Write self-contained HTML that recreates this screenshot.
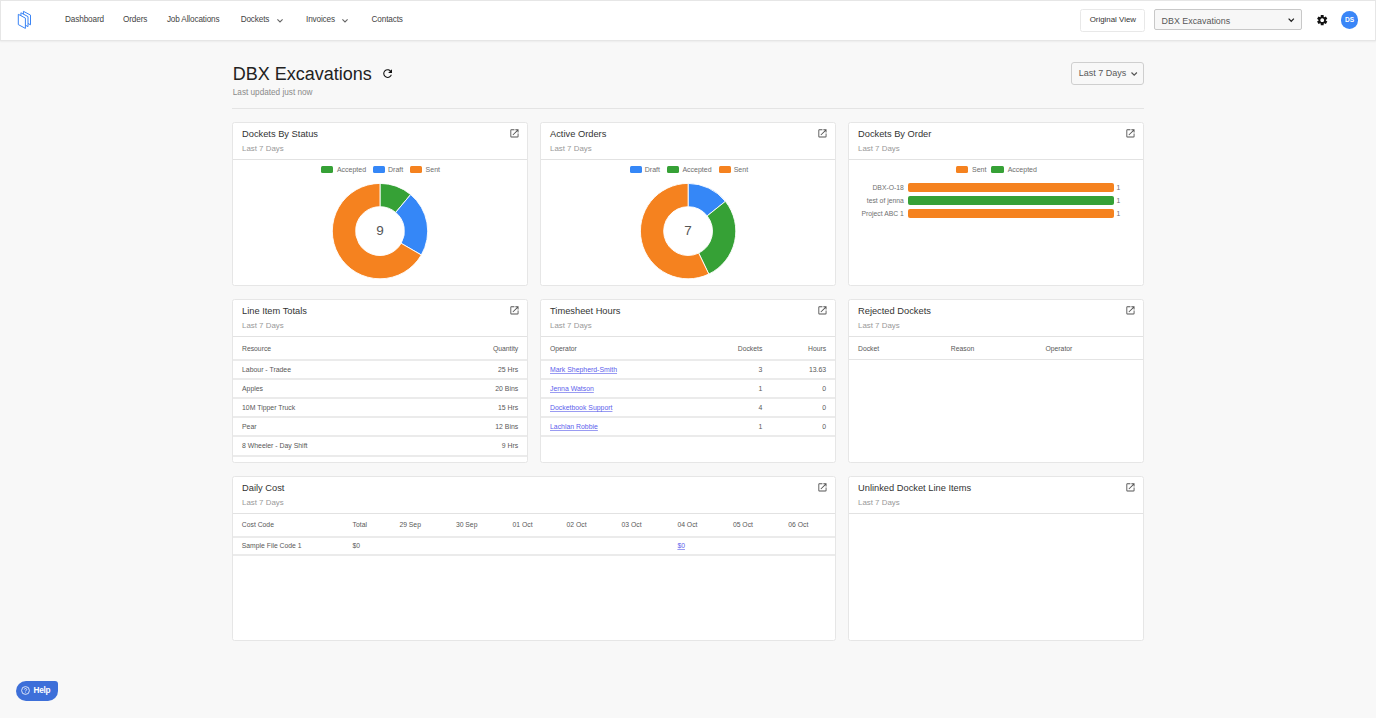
<!DOCTYPE html><html><head><meta charset="utf-8"><style>
html,body{margin:0;padding:0;}
body{width:1376px;height:718px;overflow:hidden;background:#f8f8f8;position:relative;font-family:"Liberation Sans",sans-serif;}
.t{position:absolute;white-space:nowrap;}
.b{position:absolute;box-sizing:border-box;}
svg{position:absolute;overflow:visible;}
</style></head><body>
<div class="b" style="left:0px;top:0px;width:1376px;height:41px;background:#fff;border:1px solid #e6e6e6;box-shadow:0 1px 1.5px rgba(0,0,0,0.05);"></div>
<svg style="left:14px;top:8px" width="22" height="24" viewBox="0 0 22 24"><g fill="#fff" stroke="#3a84f5" stroke-width="1" stroke-linejoin="round">
<path d="M9.4 3.3 L16.5 7.1 L16.5 16.8 L9.4 13 Z"/>
<path d="M6.9 4.8 L14 8.6 L14 18.6 L6.9 14.8 Z"/>
<path d="M4.3 6.3 L11.4 10.1 L11.4 20.4 L4.3 16.6 Z"/>
</g></svg>
<div class="t" style="left:65.10px;top:15px;font-size:8.2px;line-height:9.84px;color:#444;font-weight:normal;letter-spacing:-0.14px;">Dashboard</div>
<div class="t" style="left:123.00px;top:15px;font-size:8.2px;line-height:9.84px;color:#444;font-weight:normal;letter-spacing:-0.14px;">Orders</div>
<div class="t" style="left:166.90px;top:15px;font-size:8.2px;line-height:9.84px;color:#444;font-weight:normal;letter-spacing:-0.14px;">Job Allocations</div>
<div class="t" style="left:240.70px;top:15px;font-size:8.2px;line-height:9.84px;color:#444;font-weight:normal;letter-spacing:-0.14px;">Dockets</div>
<div class="t" style="left:306.00px;top:15px;font-size:8.2px;line-height:9.84px;color:#444;font-weight:normal;letter-spacing:-0.14px;">Invoices</div>
<div class="t" style="left:371.60px;top:15px;font-size:8.2px;line-height:9.84px;color:#444;font-weight:normal;letter-spacing:-0.14px;">Contacts</div>
<svg style="left:277.3px;top:18.6px" width="6" height="3.6" viewBox="0 0 6 3.6"><path d="M0.4 0.4 L3 3 L5.6 0.4" fill="none" stroke="#666" stroke-width="1.1"/></svg>
<svg style="left:342.2px;top:18.6px" width="6" height="3.6" viewBox="0 0 6 3.6"><path d="M0.4 0.4 L3 3 L5.6 0.4" fill="none" stroke="#666" stroke-width="1.1"/></svg>
<div class="b" style="left:1080px;top:9.2px;width:64.6px;height:22.4px;background:#fff;border:1px solid #e8e8e8;border-radius:2.5px;"></div>
<div class="t" style="left:1089.70px;top:15px;font-size:7.9px;line-height:9.48px;color:#333;font-weight:normal;">Original View</div>
<div class="b" style="left:1154.4px;top:9.4px;width:147.4px;height:21px;background:#f7f7f7;border:1px solid #c8c8c8;border-radius:2px;"></div>
<div class="t" style="left:1161.60px;top:16px;font-size:8.9px;line-height:10.68px;color:#585858;font-weight:normal;">DBX Excavations</div>
<svg style="left:1287.6px;top:18px" width="6.5" height="4.2" viewBox="0 0 6.5 4.2"><path d="M0.6 0.6 L3.25 3.3 L5.9 0.6" fill="none" stroke="#222" stroke-width="1.2"/></svg>
<svg style="left:1316.7px;top:14.6px" width="10.4" height="10.4" viewBox="0 0 24 24"><path fill="#111" fill-rule="evenodd" d="M8.42 4.40 L8.75 0.24 L15.25 0.24 L15.58 4.40 L16.79 5.10 L20.56 3.30 L23.81 8.94 L20.37 11.30 L20.37 12.70 L23.81 15.06 L20.56 20.70 L16.79 18.90 L15.58 19.60 L15.25 23.76 L8.75 23.76 L8.42 19.60 L7.21 18.90 L3.44 20.70 L0.19 15.06 L3.63 12.70 L3.63 11.30 L0.19 8.94 L3.44 3.30 L7.21 5.10 Z M12 7.6 A4.4 4.4 0 1 0 12.001 7.6 Z"/></svg>
<div class="b" style="left:1340.9px;top:11.4px;width:17.2px;height:17.2px;background:#3a86f7;border-radius:50%;"></div>
<div class="t" style="left:1149.50px;width:400px;text-align:center;top:16px;font-size:6.6px;line-height:7.92px;color:#fff;font-weight:bold;">DS</div>
<div class="t" style="left:232.80px;top:64px;font-size:18px;line-height:21.60px;color:#222;font-weight:normal;">DBX Excavations</div>
<svg style="left:380.9px;top:67.1px" width="13.2" height="13.2" viewBox="0 0 24 24"><path fill="#111" d="M17.65 6.35C16.2 4.9 14.21 4 12 4c-4.42 0-7.99 3.58-7.99 8s3.57 8 7.99 8c3.73 0 6.84-2.55 7.73-6h-2.08c-.82 2.33-3.04 4-5.65 4-3.31 0-6-2.690-6-6s2.69-6 6-6c1.66 0 3.14.69 4.22 1.78L13 11h7V4l-2.35 2.35z"/></svg>
<div class="t" style="left:232.80px;top:88px;font-size:8.2px;line-height:9.84px;color:#8a8a8a;font-weight:normal;">Last updated just now</div>
<div class="b" style="left:1071.4px;top:62.2px;width:72.2px;height:22.6px;border:1px solid #cfcfcf;border-radius:3px;"></div>
<div class="t" style="left:1078.80px;top:68px;font-size:9px;line-height:10.80px;color:#585858;font-weight:normal;">Last 7 Days</div>
<svg style="left:1130.6px;top:72px" width="6.4" height="4" viewBox="0 0 6.4 4"><path d="M0.5 0.5 L3.2 3.2 L5.9 0.5" fill="none" stroke="#555" stroke-width="1.2"/></svg>
<div class="b" style="left:232px;top:108px;width:912px;height:1px;background:#e4e4e4;"></div>
<div class="b" style="left:232px;top:122px;width:296px;height:164px;background:#fff;border:1px solid #e6e6e6;border-radius:2.5px;"></div>
<div class="t" style="left:242.00px;top:129px;font-size:9.3px;line-height:11.16px;color:#333;font-weight:normal;">Dockets By Status</div>
<div class="t" style="left:242.00px;top:144px;font-size:7.9px;line-height:9.48px;color:#999;font-weight:normal;">Last 7 Days</div>
<div class="b" style="left:233px;top:159px;width:294px;height:1px;background:#e2e2e2;"></div>
<svg style="left:509.44px;top:127.84px" width="10.9" height="10.9" viewBox="0 0 24 24"><path fill="#555" d="M19 19H5V5h7V3H5c-1.11 0-2 .9-2 2v14c0 1.1.89 2 2 2h14c1.1 0 2-.9 2-2v-7h-2v7zM14 3v2h3.59l-9.83 9.83 1.41 1.41L19 6.41V10h2V3h-7z"/></svg>
<div class="b" style="left:540px;top:122px;width:296px;height:164px;background:#fff;border:1px solid #e6e6e6;border-radius:2.5px;"></div>
<div class="t" style="left:550.00px;top:129px;font-size:9.3px;line-height:11.16px;color:#333;font-weight:normal;">Active Orders</div>
<div class="t" style="left:550.00px;top:144px;font-size:7.9px;line-height:9.48px;color:#999;font-weight:normal;">Last 7 Days</div>
<div class="b" style="left:541px;top:159px;width:294px;height:1px;background:#e2e2e2;"></div>
<svg style="left:817.44px;top:127.84px" width="10.9" height="10.9" viewBox="0 0 24 24"><path fill="#555" d="M19 19H5V5h7V3H5c-1.11 0-2 .9-2 2v14c0 1.1.89 2 2 2h14c1.1 0 2-.9 2-2v-7h-2v7zM14 3v2h3.59l-9.83 9.83 1.41 1.41L19 6.41V10h2V3h-7z"/></svg>
<div class="b" style="left:848px;top:122px;width:296px;height:164px;background:#fff;border:1px solid #e6e6e6;border-radius:2.5px;"></div>
<div class="t" style="left:858.00px;top:129px;font-size:9.3px;line-height:11.16px;color:#333;font-weight:normal;">Dockets By Order</div>
<div class="t" style="left:858.00px;top:144px;font-size:7.9px;line-height:9.48px;color:#999;font-weight:normal;">Last 7 Days</div>
<div class="b" style="left:849px;top:159px;width:294px;height:1px;background:#e2e2e2;"></div>
<svg style="left:1125.44px;top:127.84px" width="10.9" height="10.9" viewBox="0 0 24 24"><path fill="#555" d="M19 19H5V5h7V3H5c-1.11 0-2 .9-2 2v14c0 1.1.89 2 2 2h14c1.1 0 2-.9 2-2v-7h-2v7zM14 3v2h3.59l-9.83 9.83 1.41 1.41L19 6.41V10h2V3h-7z"/></svg>
<div class="b" style="left:232px;top:299px;width:296px;height:164px;background:#fff;border:1px solid #e6e6e6;border-radius:2.5px;"></div>
<div class="t" style="left:242.00px;top:306px;font-size:9.3px;line-height:11.16px;color:#333;font-weight:normal;">Line Item Totals</div>
<div class="t" style="left:242.00px;top:321px;font-size:7.9px;line-height:9.48px;color:#999;font-weight:normal;">Last 7 Days</div>
<div class="b" style="left:233px;top:336px;width:294px;height:1px;background:#e2e2e2;"></div>
<svg style="left:509.44px;top:304.84px" width="10.9" height="10.9" viewBox="0 0 24 24"><path fill="#555" d="M19 19H5V5h7V3H5c-1.11 0-2 .9-2 2v14c0 1.1.89 2 2 2h14c1.1 0 2-.9 2-2v-7h-2v7zM14 3v2h3.59l-9.83 9.83 1.41 1.41L19 6.41V10h2V3h-7z"/></svg>
<div class="b" style="left:540px;top:299px;width:296px;height:164px;background:#fff;border:1px solid #e6e6e6;border-radius:2.5px;"></div>
<div class="t" style="left:550.00px;top:306px;font-size:9.3px;line-height:11.16px;color:#333;font-weight:normal;">Timesheet Hours</div>
<div class="t" style="left:550.00px;top:321px;font-size:7.9px;line-height:9.48px;color:#999;font-weight:normal;">Last 7 Days</div>
<div class="b" style="left:541px;top:336px;width:294px;height:1px;background:#e2e2e2;"></div>
<svg style="left:817.44px;top:304.84px" width="10.9" height="10.9" viewBox="0 0 24 24"><path fill="#555" d="M19 19H5V5h7V3H5c-1.11 0-2 .9-2 2v14c0 1.1.89 2 2 2h14c1.1 0 2-.9 2-2v-7h-2v7zM14 3v2h3.59l-9.83 9.83 1.41 1.41L19 6.41V10h2V3h-7z"/></svg>
<div class="b" style="left:848px;top:299px;width:296px;height:164px;background:#fff;border:1px solid #e6e6e6;border-radius:2.5px;"></div>
<div class="t" style="left:858.00px;top:306px;font-size:9.3px;line-height:11.16px;color:#333;font-weight:normal;">Rejected Dockets</div>
<div class="t" style="left:858.00px;top:321px;font-size:7.9px;line-height:9.48px;color:#999;font-weight:normal;">Last 7 Days</div>
<div class="b" style="left:849px;top:336px;width:294px;height:1px;background:#e2e2e2;"></div>
<svg style="left:1125.44px;top:304.84px" width="10.9" height="10.9" viewBox="0 0 24 24"><path fill="#555" d="M19 19H5V5h7V3H5c-1.11 0-2 .9-2 2v14c0 1.1.89 2 2 2h14c1.1 0 2-.9 2-2v-7h-2v7zM14 3v2h3.59l-9.83 9.83 1.41 1.41L19 6.41V10h2V3h-7z"/></svg>
<div class="b" style="left:232px;top:476px;width:604px;height:165px;background:#fff;border:1px solid #e6e6e6;border-radius:2.5px;"></div>
<div class="t" style="left:242.00px;top:483px;font-size:9.3px;line-height:11.16px;color:#333;font-weight:normal;">Daily Cost</div>
<div class="t" style="left:242.00px;top:498px;font-size:7.9px;line-height:9.48px;color:#999;font-weight:normal;">Last 7 Days</div>
<div class="b" style="left:233px;top:513px;width:602px;height:1px;background:#e2e2e2;"></div>
<svg style="left:817.44px;top:481.84px" width="10.9" height="10.9" viewBox="0 0 24 24"><path fill="#555" d="M19 19H5V5h7V3H5c-1.11 0-2 .9-2 2v14c0 1.1.89 2 2 2h14c1.1 0 2-.9 2-2v-7h-2v7zM14 3v2h3.59l-9.83 9.83 1.41 1.41L19 6.41V10h2V3h-7z"/></svg>
<div class="b" style="left:848px;top:476px;width:296px;height:165px;background:#fff;border:1px solid #e6e6e6;border-radius:2.5px;"></div>
<div class="t" style="left:858.00px;top:483px;font-size:9.3px;line-height:11.16px;color:#333;font-weight:normal;">Unlinked Docket Line Items</div>
<div class="t" style="left:858.00px;top:498px;font-size:7.9px;line-height:9.48px;color:#999;font-weight:normal;">Last 7 Days</div>
<div class="b" style="left:849px;top:513px;width:294px;height:1px;background:#e2e2e2;"></div>
<svg style="left:1125.44px;top:481.84px" width="10.9" height="10.9" viewBox="0 0 24 24"><path fill="#555" d="M19 19H5V5h7V3H5c-1.11 0-2 .9-2 2v14c0 1.1.89 2 2 2h14c1.1 0 2-.9 2-2v-7h-2v7zM14 3v2h3.59l-9.83 9.83 1.41 1.41L19 6.41V10h2V3h-7z"/></svg>
<div class="b" style="left:321.1px;top:166.1px;width:12.3px;height:6.8px;background:#36a136;border-radius:1.5px;"></div>
<div class="t" style="left:336.90px;top:166px;font-size:7.0px;line-height:8.40px;color:#6e6e6e;font-weight:normal;">Accepted</div>
<div class="b" style="left:372.7px;top:166.1px;width:12.3px;height:6.8px;background:#3587f7;border-radius:1.5px;"></div>
<div class="t" style="left:388.00px;top:166px;font-size:7.0px;line-height:8.40px;color:#6e6e6e;font-weight:normal;">Draft</div>
<div class="b" style="left:410px;top:166.1px;width:12.3px;height:6.8px;background:#f5821f;border-radius:1.5px;"></div>
<div class="t" style="left:425.60px;top:166px;font-size:7.0px;line-height:8.40px;color:#6e6e6e;font-weight:normal;">Sent</div>
<div class="b" style="left:629.5px;top:166.1px;width:12.3px;height:6.8px;background:#3587f7;border-radius:1.5px;"></div>
<div class="t" style="left:644.80px;top:166px;font-size:7.0px;line-height:8.40px;color:#6e6e6e;font-weight:normal;">Draft</div>
<div class="b" style="left:667px;top:166.1px;width:12.3px;height:6.8px;background:#36a136;border-radius:1.5px;"></div>
<div class="t" style="left:682.40px;top:166px;font-size:7.0px;line-height:8.40px;color:#6e6e6e;font-weight:normal;">Accepted</div>
<div class="b" style="left:718.5px;top:166.1px;width:12.3px;height:6.8px;background:#f5821f;border-radius:1.5px;"></div>
<div class="t" style="left:733.70px;top:166px;font-size:7.0px;line-height:8.40px;color:#6e6e6e;font-weight:normal;">Sent</div>
<div class="b" style="left:955.8px;top:166.1px;width:12.3px;height:6.8px;background:#f5821f;border-radius:1.5px;"></div>
<div class="t" style="left:972.00px;top:166px;font-size:7.0px;line-height:8.40px;color:#6e6e6e;font-weight:normal;">Sent</div>
<div class="b" style="left:991.4px;top:166.1px;width:12.3px;height:6.8px;background:#36a136;border-radius:1.5px;"></div>
<div class="t" style="left:1007.70px;top:166px;font-size:7.0px;line-height:8.40px;color:#6e6e6e;font-weight:normal;">Accepted</div>
<svg style="left:0;top:0" width="1376" height="718"><path d="M380.00 183.40 A47.7 47.7 0 0 1 410.66 194.56 L395.68 212.41 A24.4 24.4 0 0 0 380.00 206.70 Z" fill="#36a136" stroke="#fff" stroke-width="0.9"/><path d="M410.66 194.56 A47.7 47.7 0 0 1 421.31 254.95 L401.13 243.30 A24.4 24.4 0 0 0 395.68 212.41 Z" fill="#3587f7" stroke="#fff" stroke-width="0.9"/><path d="M421.31 254.95 A47.7 47.7 0 1 1 380.00 183.40 L380.00 206.70 A24.4 24.4 0 1 0 401.13 243.30 Z" fill="#f5821f" stroke="#fff" stroke-width="0.9"/></svg>
<div class="t" style="left:180.00px;width:400px;text-align:center;top:223px;font-size:13.5px;line-height:16.20px;color:#555;font-weight:normal;">9</div>
<svg style="left:0;top:0" width="1376" height="718"><path d="M688.10 183.40 A47.7 47.7 0 0 1 725.39 201.36 L707.18 215.89 A24.4 24.4 0 0 0 688.10 206.70 Z" fill="#3587f7" stroke="#fff" stroke-width="0.9"/><path d="M725.39 201.36 A47.7 47.7 0 0 1 708.80 274.08 L698.69 253.08 A24.4 24.4 0 0 0 707.18 215.89 Z" fill="#36a136" stroke="#fff" stroke-width="0.9"/><path d="M708.80 274.08 A47.7 47.7 0 1 1 688.10 183.40 L688.10 206.70 A24.4 24.4 0 1 0 698.69 253.08 Z" fill="#f5821f" stroke="#fff" stroke-width="0.9"/></svg>
<div class="t" style="left:488.10px;width:400px;text-align:center;top:223px;font-size:13.5px;line-height:16.20px;color:#555;font-weight:normal;">7</div>
<div class="b" style="left:908.4px;top:183.1px;width:205.2px;height:8.8px;background:#f5821f;border-radius:2px;"></div>
<div class="t" style="left:503.80px;width:400px;text-align:right;top:184px;font-size:6.8px;line-height:8.16px;color:#707070;font-weight:normal;">DBX-O-18</div>
<div class="t" style="left:1116.50px;top:184px;font-size:6.8px;line-height:8.16px;color:#707070;font-weight:normal;">1</div>
<div class="b" style="left:908.4px;top:196.1px;width:205.2px;height:8.8px;background:#36a136;border-radius:2px;"></div>
<div class="t" style="left:503.80px;width:400px;text-align:right;top:197px;font-size:6.8px;line-height:8.16px;color:#707070;font-weight:normal;">test of jenna</div>
<div class="t" style="left:1116.50px;top:197px;font-size:6.8px;line-height:8.16px;color:#707070;font-weight:normal;">1</div>
<div class="b" style="left:908.4px;top:209.1px;width:205.2px;height:8.8px;background:#f5821f;border-radius:2px;"></div>
<div class="t" style="left:503.80px;width:400px;text-align:right;top:210px;font-size:6.8px;line-height:8.16px;color:#707070;font-weight:normal;">Project ABC 1</div>
<div class="t" style="left:1116.50px;top:210px;font-size:6.8px;line-height:8.16px;color:#707070;font-weight:normal;">1</div>
<div class="t" style="left:242.00px;top:345px;font-size:6.8px;line-height:8.16px;color:#585858;font-weight:normal;">Resource</div>
<div class="t" style="left:118.20px;width:400px;text-align:right;top:345px;font-size:6.8px;line-height:8.16px;color:#585858;font-weight:normal;">Quantity</div>
<div class="b" style="left:233px;top:359px;width:294px;height:2px;background:#ebebeb;"></div>
<div class="b" style="left:233px;top:378px;width:294px;height:2px;background:#ebebeb;"></div>
<div class="b" style="left:233px;top:397px;width:294px;height:2px;background:#ebebeb;"></div>
<div class="b" style="left:233px;top:416px;width:294px;height:2px;background:#ebebeb;"></div>
<div class="b" style="left:233px;top:435px;width:294px;height:2px;background:#ebebeb;"></div>
<div class="b" style="left:233px;top:455px;width:294px;height:2px;background:#ebebeb;"></div>
<div class="t" style="left:242.00px;top:366px;font-size:6.9px;line-height:8.28px;color:#585858;font-weight:normal;">Labour - Tradee</div>
<div class="t" style="left:118.20px;width:400px;text-align:right;top:366px;font-size:6.9px;line-height:8.28px;color:#585858;font-weight:normal;">25 Hrs</div>
<div class="t" style="left:242.00px;top:385px;font-size:6.9px;line-height:8.28px;color:#585858;font-weight:normal;">Apples</div>
<div class="t" style="left:118.20px;width:400px;text-align:right;top:385px;font-size:6.9px;line-height:8.28px;color:#585858;font-weight:normal;">20 Bins</div>
<div class="t" style="left:242.00px;top:404px;font-size:6.9px;line-height:8.28px;color:#585858;font-weight:normal;">10M Tipper Truck</div>
<div class="t" style="left:118.20px;width:400px;text-align:right;top:404px;font-size:6.9px;line-height:8.28px;color:#585858;font-weight:normal;">15 Hrs</div>
<div class="t" style="left:242.00px;top:423px;font-size:6.9px;line-height:8.28px;color:#585858;font-weight:normal;">Pear</div>
<div class="t" style="left:118.20px;width:400px;text-align:right;top:423px;font-size:6.9px;line-height:8.28px;color:#585858;font-weight:normal;">12 Bins</div>
<div class="t" style="left:242.00px;top:442px;font-size:6.9px;line-height:8.28px;color:#585858;font-weight:normal;">8 Wheeler - Day Shift</div>
<div class="t" style="left:118.20px;width:400px;text-align:right;top:442px;font-size:6.9px;line-height:8.28px;color:#585858;font-weight:normal;">9 Hrs</div>
<div class="t" style="left:550.00px;top:345px;font-size:6.8px;line-height:8.16px;color:#585858;font-weight:normal;">Operator</div>
<div class="t" style="left:362.30px;width:400px;text-align:right;top:345px;font-size:6.8px;line-height:8.16px;color:#585858;font-weight:normal;">Dockets</div>
<div class="t" style="left:426.20px;width:400px;text-align:right;top:345px;font-size:6.8px;line-height:8.16px;color:#585858;font-weight:normal;">Hours</div>
<div class="b" style="left:541px;top:359px;width:294px;height:2px;background:#ebebeb;"></div>
<div class="b" style="left:541px;top:378px;width:294px;height:2px;background:#ebebeb;"></div>
<div class="b" style="left:541px;top:397px;width:294px;height:2px;background:#ebebeb;"></div>
<div class="b" style="left:541px;top:416px;width:294px;height:2px;background:#ebebeb;"></div>
<div class="b" style="left:541px;top:435px;width:294px;height:2px;background:#ebebeb;"></div>
<div class="t" style="left:550.00px;top:366px;font-size:6.9px;line-height:8.28px;color:#5c60ec;font-weight:normal;text-decoration:underline;text-decoration-thickness:0.5px;text-decoration-color:#9a9cf2;">Mark Shepherd-Smith</div>
<div class="t" style="left:362.30px;width:400px;text-align:right;top:366px;font-size:6.9px;line-height:8.28px;color:#585858;font-weight:normal;">3</div>
<div class="t" style="left:426.20px;width:400px;text-align:right;top:366px;font-size:6.9px;line-height:8.28px;color:#585858;font-weight:normal;">13.63</div>
<div class="t" style="left:550.00px;top:385px;font-size:6.9px;line-height:8.28px;color:#5c60ec;font-weight:normal;text-decoration:underline;text-decoration-thickness:0.5px;text-decoration-color:#9a9cf2;">Jenna Watson</div>
<div class="t" style="left:362.30px;width:400px;text-align:right;top:385px;font-size:6.9px;line-height:8.28px;color:#585858;font-weight:normal;">1</div>
<div class="t" style="left:426.20px;width:400px;text-align:right;top:385px;font-size:6.9px;line-height:8.28px;color:#585858;font-weight:normal;">0</div>
<div class="t" style="left:550.00px;top:404px;font-size:6.9px;line-height:8.28px;color:#5c60ec;font-weight:normal;text-decoration:underline;text-decoration-thickness:0.5px;text-decoration-color:#9a9cf2;">Docketbook Support</div>
<div class="t" style="left:362.30px;width:400px;text-align:right;top:404px;font-size:6.9px;line-height:8.28px;color:#585858;font-weight:normal;">4</div>
<div class="t" style="left:426.20px;width:400px;text-align:right;top:404px;font-size:6.9px;line-height:8.28px;color:#585858;font-weight:normal;">0</div>
<div class="t" style="left:550.00px;top:423px;font-size:6.9px;line-height:8.28px;color:#5c60ec;font-weight:normal;text-decoration:underline;text-decoration-thickness:0.5px;text-decoration-color:#9a9cf2;">Lachlan Robbie</div>
<div class="t" style="left:362.30px;width:400px;text-align:right;top:423px;font-size:6.9px;line-height:8.28px;color:#585858;font-weight:normal;">1</div>
<div class="t" style="left:426.20px;width:400px;text-align:right;top:423px;font-size:6.9px;line-height:8.28px;color:#585858;font-weight:normal;">0</div>
<div class="t" style="left:858.00px;top:345px;font-size:6.8px;line-height:8.16px;color:#585858;font-weight:normal;">Docket</div>
<div class="t" style="left:950.80px;top:345px;font-size:6.8px;line-height:8.16px;color:#585858;font-weight:normal;">Reason</div>
<div class="t" style="left:1045.50px;top:345px;font-size:6.8px;line-height:8.16px;color:#585858;font-weight:normal;">Operator</div>
<div class="b" style="left:849px;top:359px;width:294px;height:1px;background:#e4e4e4;"></div>
<div class="t" style="left:241.80px;top:521px;font-size:6.8px;line-height:8.16px;color:#585858;font-weight:normal;">Cost Code</div>
<div class="t" style="left:352.60px;top:521px;font-size:6.8px;line-height:8.16px;color:#585858;font-weight:normal;">Total</div>
<div class="t" style="left:399.40px;top:521px;font-size:6.8px;line-height:8.16px;color:#585858;font-weight:normal;">29 Sep</div>
<div class="t" style="left:455.90px;top:521px;font-size:6.8px;line-height:8.16px;color:#585858;font-weight:normal;">30 Sep</div>
<div class="t" style="left:512.60px;top:521px;font-size:6.8px;line-height:8.16px;color:#585858;font-weight:normal;">01 Oct</div>
<div class="t" style="left:566.60px;top:521px;font-size:6.8px;line-height:8.16px;color:#585858;font-weight:normal;">02 Oct</div>
<div class="t" style="left:621.60px;top:521px;font-size:6.8px;line-height:8.16px;color:#585858;font-weight:normal;">03 Oct</div>
<div class="t" style="left:677.40px;top:521px;font-size:6.8px;line-height:8.16px;color:#585858;font-weight:normal;">04 Oct</div>
<div class="t" style="left:732.90px;top:521px;font-size:6.8px;line-height:8.16px;color:#585858;font-weight:normal;">05 Oct</div>
<div class="t" style="left:788.30px;top:521px;font-size:6.8px;line-height:8.16px;color:#585858;font-weight:normal;">06 Oct</div>
<div class="b" style="left:233px;top:536px;width:602px;height:2px;background:#ebebeb;"></div>
<div class="t" style="left:241.80px;top:542px;font-size:6.8px;line-height:8.16px;color:#585858;font-weight:normal;">Sample File Code 1</div>
<div class="t" style="left:352.60px;top:542px;font-size:6.8px;line-height:8.16px;color:#585858;font-weight:normal;">$0</div>
<div class="t" style="left:677.40px;top:542px;font-size:6.8px;line-height:8.16px;color:#5c60ec;font-weight:normal;text-decoration:underline;text-decoration-thickness:0.5px;text-decoration-color:#9a9cf2;">$0</div>
<div class="b" style="left:233px;top:554px;width:602px;height:2px;background:#ebebeb;"></div>
<div class="b" style="left:16.2px;top:680.5px;width:41.8px;height:20.3px;background:#3d6fd9;border-radius:10px 3px 10px 10px;"></div>
<svg style="left:21px;top:686px" width="9" height="9" viewBox="0 0 9 9"><circle cx="4.5" cy="4.5" r="3.9" fill="none" stroke="#fff" stroke-width="0.8"/><path d="M3.3 3.5 C3.3 2.2 5.7 2.2 5.7 3.5 C5.7 4.4 4.5 4.4 4.5 5.4" fill="none" stroke="#fff" stroke-width="0.8"/><circle cx="4.5" cy="6.7" r="0.45" fill="#fff"/></svg>
<div class="t" style="left:33.60px;top:686px;font-size:8.2px;line-height:9.84px;color:#fff;font-weight:bold;letter-spacing:-0.3px;">Help</div>
</body></html>
